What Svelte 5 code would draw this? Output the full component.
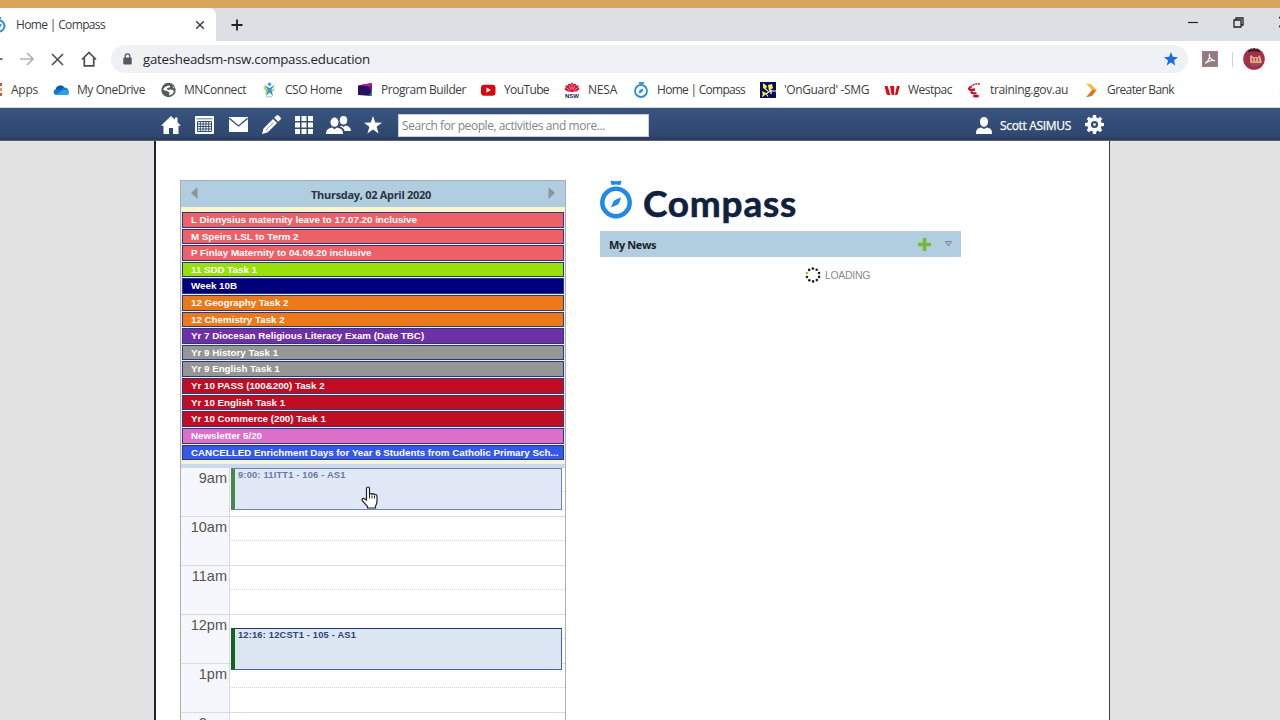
<script lang="ts">
  interface Bookmark {
    icon: string;
    label: string;
    width: number;
    textWidth: number;
  }

  interface Lesson {
    title: string;
    top: number;
    height: number;
    past: boolean;
  }

  const bookmarks: Bookmark[] = [
    { icon: 'onedrive', label: 'My OneDrive', width: 107, textWidth: 68 },
    { icon: 'globe', label: 'MNConnect', width: 101, textWidth: 62 },
    { icon: 'cso', label: 'CSO Home', width: 96, textWidth: 57 },
    { icon: 'builder', label: 'Program Builder', width: 123, textWidth: 85 },
    { icon: 'youtube', label: 'YouTube', width: 84, textWidth: 45 },
    { icon: 'nesa', label: 'NESA', width: 69, textWidth: 29 },
    { icon: 'compass', label: 'Home | Compass', width: 127, textWidth: 88 },
    { icon: 'onguard', label: "'OnGuard' -SMG", width: 124, textWidth: 85 },
    { icon: 'westpac', label: 'Westpac', width: 82, textWidth: 44 },
    { icon: 'training', label: 'training.gov.au', width: 117, textWidth: 78 },
    { icon: 'greater', label: 'Greater Bank', width: 110, textWidth: 67 }
  ];

  const allDay = [
    { title: 'L Dionysius maternity leave to 17.07.20 inclusive', color: '#ee6067' },
    { title: 'M Speirs LSL to Term 2', color: '#ee6067' },
    { title: 'P Finlay Maternity to 04.09.20 inclusive', color: '#ee6067' },
    { title: '11 SDD Task 1', color: '#99e00a' },
    { title: 'Week 10B', color: '#00007a' },
    { title: '12 Geography Task 2', color: '#eb791b' },
    { title: '12 Chemistry Task 2', color: '#eb791b' },
    { title: 'Yr 7 Diocesan Religious Literacy Exam (Date TBC)', color: '#7030a5' },
    { title: 'Yr 9 History Task 1', color: '#969696' },
    { title: 'Yr 9 English Task 1', color: '#969696' },
    { title: 'Yr 10 PASS (100&200) Task 2', color: '#c10d22' },
    { title: 'Yr 10 English Task 1', color: '#c10d22' },
    { title: 'Yr 10 Commerce (200) Task 1', color: '#c10d22' },
    { title: 'Newsletter 5/20', color: '#dc6fc8' },
    { title: 'CANCELLED Enrichment Days for Year 6 Students from Catholic Primary Sch...', color: '#3459e6' }
  ];

  const hours = ['9am', '10am', '11am', '12pm', '1pm', '2pm'];

  const lessons: Lesson[] = [
    { title: '9:00: 11ITT1 - 106 - AS1', top: 0, height: 42, past: true },
    { title: '12:16: 12CST1 - 105 - AS1', top: 160, height: 42, past: false }
  ];

  const spinnerDots = Array.from({ length: 10 }, (_, i) => {
    const angle = (i / 10) * Math.PI * 2 + 0.3;
    return { x: 8 + Math.cos(angle) * 6.4, y: 8 + Math.sin(angle) * 6.4, lime: i === 5 };
  });

  const gearTeeth = [0, 45, 90, 135, 180, 225, 270, 315];

  let search = '';

  // Spread or tighten the letters so a label takes a set width
  function fit(node: HTMLElement, width: number) {
    const range = document.createRange();
    range.selectNodeContents(node);
    const natural = range.getBoundingClientRect().width;
    const count = (node.textContent || '').trim().length;
    node.style.letterSpacing = `${(width - natural) / count}px`;
  }
</script>

<div class="screen">
  <div class="desktop-edge"></div>

  <header class="tabs">
    <div class="tab">
      <svg class="favicon" width="14" height="16" viewBox="0 0 14 16">
        <path d="M5 1h4" stroke="#2d8be0" stroke-width="2" />
        <circle cx="7" cy="9" r="5.5" fill="none" stroke="#2d8be0" stroke-width="2" />
        <path d="M5 11.500l1.500-3.500 3.500-1.500-1.500 3.500z" fill="#2d8be0" />
      </svg>
      <span class="tab-title" use:fit={89}>Home | Compass</span>
      <svg class="tab-close" width="10" height="10" viewBox="0 0 10 10">
        <path d="M1.200 1.200l7.600 7.600M8.800 1.200L1.200 8.800" stroke="#3c4043" stroke-width="1.500" />
      </svg>
    </div>
    <svg class="new-tab" width="12" height="12" viewBox="0 0 12 12">
      <path d="M6 .5v11M.5 6h11" stroke="#222" stroke-width="1.800" />
    </svg>
    <div class="window-buttons">
      <svg width="10" height="12" viewBox="0 0 10 12"><path d="M0 6.500h10" stroke="#222" stroke-width="1.200" /></svg>
      <svg width="11" height="11" viewBox="0 0 11 11" fill="none" stroke="#222" stroke-width="1.300">
        <path d="M1 3h7v7H1z" /><path d="M3 3V1h7v7H8" />
      </svg>
      <svg width="10" height="12" viewBox="0 0 10 12"><path d="M0 1l10 10M10 1L0 11" stroke="#222" stroke-width="1.300" /></svg>
    </div>
  </header>

  <div class="toolbar">
    <svg class="back" width="3" height="14" viewBox="0 0 3 14"><path d="M0 7h2.500" stroke="#4a4d51" stroke-width="1.600" /></svg>
    <svg class="forward" width="14" height="14" viewBox="0 0 14 14" fill="none" stroke="#b0b2b5" stroke-width="1.600">
      <path d="M0 7h12.500M7 1l6 6-6 6" />
    </svg>
    <svg class="stop" width="13" height="13" viewBox="0 0 13 13"><path d="M1 1l11 11M12 1L1 12" stroke="#4a4d51" stroke-width="1.600" /></svg>
    <svg class="home" width="16" height="16" viewBox="0 0 16 16" fill="none" stroke="#4a4d51" stroke-width="1.700">
      <path d="M1 8.500L8 1.500l7 7M3.300 7v7.800h9.400V7" />
    </svg>
    <div class="address">
      <svg width="9" height="12" viewBox="0 0 9 12">
        <path d="M2.200 5V3.200a2.300 2.300 0 0 1 4.600 0V5" fill="none" stroke="#55585c" stroke-width="1.300" />
        <rect x=".3" y="4.500" width="8.400" height="7" rx="1" fill="#55585c" />
      </svg>
      <span class="url" use:fit={227}>gatesheadsm-nsw.compass.education</span>
      <svg class="saved" width="14" height="14" viewBox="0 0 24 24">
        <path d="M12 0l3.200 8.300 8.800.5-6.900 5.600 2.300 8.600L12 18.200 4.600 23l2.300-8.600L0 8.800l8.800-.5z" fill="#1a6fdc" />
      </svg>
    </div>
    <svg class="pdf" width="16" height="16" viewBox="0 0 16 16">
      <path d="M0 0h16v16H0z" fill="#b5787a" />
      <path d="M1.200 1.200h13.600v13.600H1.200z" fill="#8f7c7c" />
      <path d="M3.200 12.300c2.800-1.500 5-6 4.300-8.800-1.200 1.500 1.500 6 5.500 6.200-3-.6-6.800.1-9.800 2.600z" fill="none" stroke="#fff" stroke-width="1.100" />
    </svg>
    <i class="divider"></i>
    <svg class="avatar" width="22" height="22" viewBox="0 0 22 22">
      <circle cx="11" cy="11" r="10.800" fill="#a62f44" />
      <path d="M5 2.500l2 1 1-2 2 1.500 1-2 1.500 2 2-1.500.5 2 2-1" stroke="#2f2228" stroke-width="1.500" fill="none" />
      <path d="M7 15V8l1.500-1L10 9h5l1-2 1.500 1.500L19 15z" fill="#cfa697" />
      <path d="M9.500 10v3M12.500 10v3M15.500 10v3" stroke="#b8494a" />
      <path d="M7.500 14.500h10.500" stroke="#e0a55c" stroke-width="1.500" />
      <path d="M8 17h8" stroke="#6d6f92" stroke-width="1.200" />
    </svg>
  </div>

  <nav class="bookmarks">
    <div class="apps">
      <i></i>
      <span use:fit={27}>Apps</span>
    </div>
    {#each bookmarks as mark}
      <div class="bookmark" style="width: {mark.width}px">
        <svg width="16" height="16" viewBox="0 0 16 16">
          {#if mark.icon === 'onedrive'}
            <path d="M3 13a3 3 0 0 1-.4-5.800A5 5 0 0 1 11.500 5.500a4 4 0 0 1 2 7.500z" fill="#1379cf" />
            <path d="M2.600 7.200A5 5 0 0 1 11 5L7 8z" fill="#0d5ba8" />
            <path d="M3 13l7-5c3-1 6 .5 6 2.700 0 1.500-1 2.300-2.500 2.300z" fill="#2ba2e8" />
          {:else if mark.icon === 'globe'}
            <circle cx="8.500" cy="8" r="7.200" fill="#57595c" />
            <path d="M3 7.500L5 5l3.500-1.500 2 .5-1 1.500-2.500.5.5 2 4-.5 2.500 1.500-1.500 3-3.500 1.500.5-3-2.500-1.500-2-.5z" fill="#fff" />
            <path d="M12 4l2.500 1.500-.5 1z" fill="#fff" />
          {:else if mark.icon === 'cso'}
            <circle cx="8.500" cy="2.200" r="1.700" fill="#3aa3d8" />
            <path d="M3 3l5.500 3L14 3l-3.500 4.500L12 14l-3.500-3.500L5 14l1.500-6.500z" fill="#2f9bc9" />
            <path d="M3 5l3 4-1 3M13.500 7l-2.500 2" stroke="#a7cf42" stroke-width="1.500" fill="none" />
            <path d="M5 14.800h6" stroke="#9bc5dc" />
          {:else if mark.icon === 'builder'}
            <path d="M1 3.500L14.500 1l.5 13-14-1z" fill="#2b0f63" />
            <path d="M2 3.300L15 1v5L12 4.500z" fill="#b31d92" />
            <path d="M12 4.500L15 2.500v9z" fill="#6a1d86" />
            <path d="M15 8v6l-3-.5z" fill="#21888f" />
          {:else if mark.icon === 'youtube'}
            <rect x="1" y="2.700" width="14.500" height="11" rx="3" fill="#d5090f" />
            <path d="M6.500 5.500v5.200l4.500-2.600z" fill="#fff" />
          {:else if mark.icon === 'nesa'}
            <path d="M8 .3l1.500 2 2-.9.700 2 2.600.2-.6 2 1.500 1.500-2.700 2.200-5 .7-5-.7L.3 7.100l1.500-1.500-.6-2 2.600-.2.700-2 2 .9z" fill="#d7153a" />
            <path d="M8 2v5M5 3.500l2 4M11 3.500l-2 4M2.500 6L6 8.300M13.500 6L10 8.300" stroke="#fff" stroke-width=".5" />
            <text x="8" y="15.600" text-anchor="middle" textLength="14" class="nsw">NSW</text>
          {:else if mark.icon === 'compass'}
            <path d="M6 1h5" stroke="#2d8be0" stroke-width="1.800" />
            <circle cx="8" cy="9" r="6" fill="none" stroke="#2d8be0" stroke-width="1.800" />
            <path d="M5.500 11.500l1.300-3.700 3.700-1.300-1.300 3.700z" fill="#2d8be0" />
          {:else if mark.icon === 'onguard'}
            <path d="M0 0h16v16H0z" fill="#0b0c5c" />
            <path d="M3 1l4 3-1 3-3-1zM8 3l4-1 1 4-4 3zM2 9l4 2-3 3z" fill="#f3ef4d" />
            <path d="M6 12l4-3h6M11 8v4" stroke="#fff" stroke-width="1.200" fill="none" />
            <path d="M2 14.500l4-3 2 3M4 6l4 3" stroke="#f3ef4d" stroke-width="1.200" fill="none" />
          {:else if mark.icon === 'westpac'}
            <path d="M.5 4h3l3 9H4q-1.200 0-1.600-1.500zM6 4h4.200v9H8.500Q7.500 13 7.200 11zM12.800 4h3l-1.900 7.500q-.400 1.500-1.600 1.500h-1.300z" fill="#d5101c" />
          {:else if mark.icon === 'training'}
            <path d="M14 2q-5-1-8.500 2" stroke="#c81e38" stroke-width="1.700" stroke-dasharray="2 .7" fill="none" />
            <path d="M5.500 4.500Q1 7 5 8l4-.5M5 9.500q1 2.500 5.500 1.500" stroke="#c8102e" stroke-width="2.300" fill="none" />
            <ellipse cx="10" cy="14" rx="3" ry="1.500" fill="#c8102e" />
          {:else}
            <path d="M3 1.500l5 .8L13.500 8H9z" fill="#f2bb30" />
            <path d="M9 8h4.500l-4.500 6-6 1.300z" fill="#dc7420" />
          {/if}
        </svg>
        <span use:fit={mark.textWidth}>{mark.label}</span>
      </div>
    {/each}
    <span class="more">»</span>
  </nav>

  <div class="menu">
    <div class="menu-inner">
      <svg class="m-home" width="20" height="18" viewBox="0 0 20 18">
        <path d="M10 0l4 3.800V1.500h2.500v4.700L20 9.800h-2.500V18H12v-6H8v6H2.500V9.800H0z" fill="#fff" />
      </svg>
      <svg class="m-cal" width="19" height="18" viewBox="0 0 19 18">
        <rect width="19" height="18" rx="1" fill="#fff" />
        <path d="M1.500 2.800h16" stroke="#35517c" stroke-width=".8" />
        <path d="M2.500 5.500h14v10h-14zM2.500 8h14M2.500 10.500h14M2.500 13h14M5.300 5.500v10M8.100 5.500v10M10.900 5.500v10M13.700 5.500v10" fill="none" stroke="#35517c" />
      </svg>
      <svg class="m-mail" width="19" height="15" viewBox="0 0 19 15">
        <rect width="19" height="15" fill="#fff" />
        <path d="M.3 1.300L9.500 9l9.200-7.700" fill="none" stroke="#35517c" stroke-width="1.300" />
      </svg>
      <svg class="m-pen" width="19" height="19" viewBox="0 0 19 19">
        <path d="M0 19l1.500-5.500L11 4l4 4-9.500 9.500zM12.200 2.800L14.500.5q1-.8 2 0l2 2q.8 1 0 2l-2.300 2.300z" fill="#fff" />
        <path d="M4 15l7.500-7.500" stroke="#35517c" stroke-width=".6" />
      </svg>
      <svg class="m-grid" width="18" height="18" viewBox="0 0 18 18">
        <path d="M0 0h5v5H0zM6.500 0h5v5h-5zM13 0h5v5h-5zM0 6.500h5v5H0zM6.500 6.500h5v5h-5zM13 6.500h5v5h-5zM0 13h5v5H0zM6.500 13h5v5h-5zM13 13h5v5h-5z" fill="#fff" />
      </svg>
      <svg class="m-people" width="25" height="18" viewBox="0 0 25 18">
        <g fill="#fff">
          <ellipse cx="17.500" cy="4.300" rx="3.700" ry="4.200" />
          <path d="M15.500 9.500l2 1.500 2-1.500q5 .5 5.500 5.500h-6.500q-.5-3-4.500-4.500z" />
          <ellipse cx="8.500" cy="6.200" rx="4" ry="4.600" />
          <path d="M0 18q0-4.500 3-5.500l3-1 2.500 1.800 2.500-1.800 3 1q3 1 3 5.500z" />
        </g>
      </svg>
      <svg class="m-star" width="18" height="18" viewBox="0 0 24 24">
        <path d="M12 0l3 8.700 9 .2-7.200 5.500 2.700 9L12 18l-7.500 5.400 2.700-9L0 8.900l9-.2z" fill="#fff" />
      </svg>
      <input class="search" type="text" bind:value={search} placeholder="Search for people, activities and more..." />
      <div class="user">
        <svg width="16" height="17" viewBox="0 0 16 17">
          <path d="M8 0c2.500 0 4 2 4 4.800S10.300 9.800 8 9.800 4 7.600 4 4.800 5.500 0 8 0zM0 17q0-5 2.500-5.800l2.500-.7L8 12l3-1.500 2.500.7Q16 12 16 17z" fill="#fff" />
        </svg>
        <span use:fit={71}>Scott ASIMUS</span>
        <svg width="19" height="19" viewBox="-9 -9 18 18">
          {#each gearTeeth as angle}
            <path d="M-1.900-5.500L-1.500-9h3l.4 3.500z" fill="#fff" transform="rotate({angle})" />
          {/each}
          <circle r="5.100" fill="none" stroke="#fff" stroke-width="3.400" />
          <circle r="1.300" fill="#fff" />
        </svg>
      </div>
    </div>
  </div>

  <main class="backdrop">
    <div class="page">
      <section class="calendar">
        <div class="cal-head">
          <svg width="7" height="12" viewBox="0 0 7 12"><path d="M6.500 0v12L0 6z" fill="#8b959c" /></svg>
          <span use:fit={120}>Thursday, 02 April 2020</span>
          <svg width="7" height="12" viewBox="0 0 7 12"><path d="M.5 0v12L7 6z" fill="#8b959c" /></svg>
        </div>
        <div class="all-day">
          {#each allDay as event}
            <div class="all-day-event" style="background: {event.color}">{event.title}</div>
          {/each}
        </div>
        <div class="day">
          {#each hours as hour}
            <div class="hour">
              <span class="hour-label">{hour}</span>
              <div class="slot"></div>
            </div>
          {/each}
          {#each lessons as lesson}
            <div class="lesson" class:past={lesson.past} style="top: {lesson.top}px; height: {lesson.height}px">
              {lesson.title}
            </div>
          {/each}
          <svg class="pointer" width="18" height="23" viewBox="0 0 18 23">
            <path d="M5.500 14V2.500Q5.500 1 7 1t1.500 1.500V9q0-1.500 1.300-1.500T11 9q0-1.300 1.300-1.300T13.500 9.500q0-1 1.200-1t1.300 1.500v5q0 3-1.500 5v2h-8v-1.500L1.500 15Q.5 13.500 1.500 12.700t2.300.300z" fill="#fff" stroke="#222" stroke-width="1.200" />
            <path d="M8.500 9v3.500M11 9.500v3M13.500 10v2.500" stroke="#222" />
          </svg>
        </div>
      </section>

      <section class="news">
        <div class="logo">
          <svg width="33" height="40" viewBox="0 0 33 40">
            <path d="M10.500.5q5.500 1.300 11 0l-1 4.500q-4.500-.8-9 0z" fill="#2189e8" />
            <circle cx="16" cy="22.500" r="13.700" fill="none" stroke="#2189e8" stroke-width="4.500" />
            <path d="M11 27.500l2.500-6.500q3-2.500 7.500-3.500-1 4.500-3 7z" fill="#2189e8" />
          </svg>
          <span use:fit={154}>Compass</span>
        </div>
        <div class="news-head">
          <span use:fit={47}>My News</span>
          <svg width="13" height="13" viewBox="0 0 13 13"><path d="M6.500 0v13M0 6.500h13" stroke="#79b834" stroke-width="3.600" /></svg>
          <svg width="7" height="6" viewBox="0 0 7 6"><path d="M.5.5h6l-3 4.500z" fill="#b9bfc8" stroke="#7d8794" /></svg>
        </div>
        <div class="loading">
          <svg width="16" height="16" viewBox="0 0 16 16">
            {#each spinnerDots as dot}
              <circle cx={dot.x} cy={dot.y} r="1.300" fill={dot.lime ? '#8cc63f' : '#222'} />
            {/each}
          </svg>
          <span use:fit={45}>LOADING</span>
        </div>
      </section>
    </div>
  </main>
</div>

<style>
  :global(body) {
    margin: 0;
    overflow: hidden;
  }

  .screen {
    width: 1280px;
    height: 720px;
    overflow: hidden;
    display: flex;
    flex-direction: column;
    font-family: 'Open Sans', 'Noto Sans', sans-serif;
    font-size: 12px;
    color: #3c4043;
    background: #fff;
  }

  .screen * {
    box-sizing: border-box;
  }

  svg {
    display: block;
    flex-shrink: 0;
  }

  span {
    white-space: nowrap;
  }

  .desktop-edge {
    height: 8px;
    flex-shrink: 0;
    background: #d9a55c;
  }

  /* browser chrome */
  .tabs {
    height: 33px;
    flex-shrink: 0;
    display: flex;
    align-items: center;
    background: #dcdfe4;
  }

  .tab {
    width: 216px;
    height: 33px;
    display: flex;
    align-items: center;
    background: #fff;
    border-radius: 0 7px 0 0;
  }

  .favicon {
    margin-left: -8px;
  }

  .tab-title {
    margin-left: 10px;
    width: 178px;
  }

  .tab-close {
    margin-left: 1px;
  }

  .new-tab {
    margin-left: 15px;
  }

  .window-buttons {
    margin-left: auto;
    margin-right: -9px;
    padding-bottom: 5px;
    display: flex;
    align-items: center;
    gap: 35px;
  }

  .toolbar {
    height: 36px;
    flex-shrink: 0;
    display: flex;
    align-items: center;
  }

  .forward {
    margin-left: 17px;
  }

  .stop {
    margin-left: 17px;
  }

  .home {
    margin-left: 17px;
  }

  .address {
    width: 1077px;
    height: 28px;
    margin-left: 14px;
    padding: 0 10px 0 12px;
    display: flex;
    align-items: center;
    border-radius: 14px;
    background: #eff1f4;
  }

  .url {
    margin-left: 11px;
    font-size: 13.3px;
    color: #24272a;
  }

  .saved {
    margin-left: auto;
  }

  .pdf {
    margin-left: 14px;
  }

  .divider {
    width: 1px;
    height: 15px;
    margin-left: 14px;
    background: #cfd2d6;
  }

  .avatar {
    margin-left: 10px;
  }

  .bookmarks {
    height: 31px;
    flex-shrink: 0;
    padding-bottom: 5px;
    display: flex;
    align-items: center;
    border-bottom: 1px solid #d5dbe3;
  }

  .apps {
    width: 53px;
    display: flex;
    align-items: center;
    gap: 9px;
  }

  .apps i {
    width: 2px;
    height: 13px;
    background: repeating-linear-gradient(#d5503a 0 3px, #fff 3px 5px, #e0a53a 5px 8px, #fff 8px 10px);
  }

  .bookmark {
    flex-shrink: 0;
    display: flex;
    align-items: center;
    gap: 8px;
  }

  .more {
    margin-left: auto;
    margin-right: -5px;
    color: #c9cbce;
  }

  .nsw {
    font: bold 6px 'Liberation Sans', Arial, sans-serif;
    fill: #17234f;
  }

  /* site menu */
  .menu {
    height: 33px;
    flex-shrink: 0;
    background: linear-gradient(#38547f, #304870 85%, #2a3a5c);
    border-bottom: 1px solid #5c606c;
  }

  .menu-inner {
    height: 33px;
    padding-left: 161px;
    display: flex;
    align-items: center;
  }

  .m-cal {
    margin-left: 14px;
  }

  .m-mail {
    margin-left: 15px;
  }

  .m-pen {
    margin-left: 14px;
  }

  .m-grid {
    margin-left: 14px;
  }

  .m-people {
    margin-left: 13px;
  }

  .m-star {
    margin-left: 13px;
  }

  .search {
    width: 251px;
    height: 23px;
    margin: 1px 0 0 16px;
    padding: 1px 3px 0;
    border: 1px solid #c9ced8;
    border-radius: 0;
    background: #fff;
    font-family: 'Open Sans', sans-serif;
    font-size: 12px;
    letter-spacing: -0.43px;
  }

  .search::placeholder {
    color: #858585;
    opacity: 1;
  }

  .user {
    margin-left: 327px;
    padding-top: 1px;
    display: flex;
    align-items: center;
    gap: 8px;
    color: #fff;
    -webkit-text-stroke: 0.25px #fff;
  }

  .user svg:last-child {
    margin-left: 6px;
    margin-bottom: 2px;
  }

  /* page */
  .backdrop {
    flex: 1;
    min-height: 0;
    display: flex;
    background: #e2e2e3;
  }

  .page {
    width: 956px;
    margin-left: 154px;
    padding: 39px 0 0 24px;
    display: flex;
    align-items: flex-start;
    background: #fff;
    border-left: 2px solid #202126;
    border-right: 1px solid #3c3e46;
  }

  .calendar {
    width: 386px;
    flex-shrink: 0;
    border: 1px solid #a9aeb5;
  }

  .cal-head {
    height: 26px;
    padding: 0 10px;
    display: flex;
    align-items: center;
    background: #b1cee1;
    color: #2b343e;
    font-size: 11px;
    font-weight: 700;
  }

  .cal-head span {
    margin: 0 auto 0 113px;
  }

  .cal-head svg {
    margin-bottom: 2px;
  }

  .all-day {
    height: 257px;
    padding: 5px 0 0 1px;
    display: flex;
    flex-direction: column;
    gap: 1.03px;
    background: linear-gradient(#faf6cf 0 5px, #e9edf5 5px 251px, #f5f3df 251px);
  }

  .all-day-event {
    width: 382px;
    height: 15.6px;
    flex-shrink: 0;
    padding: 0 0 0 8px;
    border: 1px solid #2c3a78;
    color: #fff;
    font: bold 9.8px/14.4px 'Liberation Sans', Arial, sans-serif;
    letter-spacing: -0.02px;
    white-space: nowrap;
  }

  .day {
    height: 300px;
    border-top: 4px solid #cbdae8;
    position: relative;
  }

  .hour {
    height: 49px;
    display: flex;
    border-bottom: 1px solid #d9dcdf;
  }

  .hour-label {
    width: 49px;
    flex-shrink: 0;
    padding: 1px 2px 0 0;
    text-align: right;
    font: 14.5px/18px 'Liberation Sans', Arial, sans-serif;
    color: #55524f;
    background: #f5f7fd;
    border-right: 1px solid #d9dcdf;
  }

  .slot {
    flex: 1;
    height: 24px;
    border-bottom: 1px dotted #d5d5d5;
  }

  .lesson {
    position: absolute;
    left: 50px;
    width: 331px;
    padding: 1px 0 0 3px;
    border: 1px solid #4264b8;
    border-top-color: #21386e;
    border-left: 4px solid #12651c;
    background: #dce6f3;
    color: #2d4377;
    font: bold 9.3px/11px 'Liberation Sans', Arial, sans-serif;
    letter-spacing: 0.19px;
  }

  .lesson.past {
    background: #e1e8f5;
    border-color: #6d83c1;
    border-left-color: #45884c;
    color: #6678ab;
  }

  .pointer {
    position: absolute;
    left: 180px;
    top: 18px;
  }

  .news {
    width: 361px;
    margin-left: 34px;
  }

  .logo {
    height: 51px;
    display: flex;
    align-items: flex-start;
    gap: 10px;
    color: #10203f;
    font: 700 37px/46px Lato, sans-serif;
    -webkit-text-stroke: 0.6px #10203f;
  }

  .news-head {
    height: 26px;
    padding: 0 9px;
    display: flex;
    align-items: center;
    background: #b1cee1;
    color: #1c222b;
    font-size: 11px;
    font-weight: 700;
  }

  .news-head span {
    flex: 1;
  }

  .news-head svg:last-child {
    margin-left: 14px;
  }

  .loading {
    padding: 10px 0 0 205px;
    display: flex;
    align-items: center;
    gap: 4px;
    color: #8a8a8a;
    font: 10.5px/16px 'Liberation Sans', Arial, sans-serif;
  }
</style>
